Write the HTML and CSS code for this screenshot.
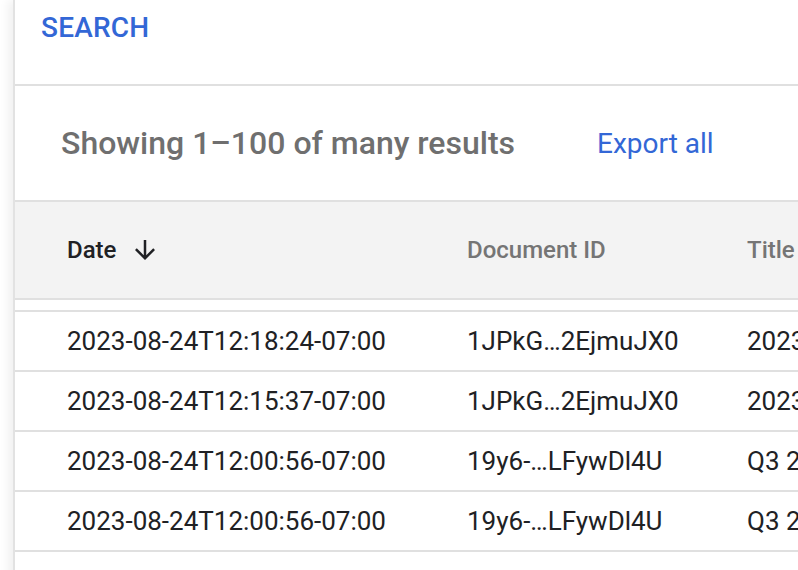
FILE: index.html
```html
<!DOCTYPE html>
<html lang="en">
<head>
<meta charset="utf-8">
<title>Results</title>
<link rel="stylesheet" href="styles.css">
</head>
<body>
<div class="panel">
  <div class="topbar">
    <span class="search">SEARCH</span>
  </div>
  <div class="toolbar">
    <span class="summary">Showing 1–100 of many results</span>
    <span class="export">Export all</span>
  </div>
  <div class="table">
    <div class="thead">
      <div class="th th-date">Date
        <svg class="sort" viewBox="0 0 24 24" width="30" height="30"><path d="M20 12l-1.41-1.41L13 16.17V4h-2v12.17l-5.58-5.59L4 12l8 8 8-8z" fill="#202124"/></svg>
      </div>
      <div class="th">Document ID</div>
      <div class="th">Title</div>
    </div>
    <div class="tbody">
      <div class="tr">
        <div class="td">2023-08-24T12:18:24-07:00</div>
        <div class="td">1JPkG…2EjmuJX0</div>
        <div class="td">2023-08-24 Weekly sync notes</div>
      </div>
      <div class="tr">
        <div class="td">2023-08-24T12:15:37-07:00</div>
        <div class="td">1JPkG…2EjmuJX0</div>
        <div class="td">2023-08-24 Weekly sync notes</div>
      </div>
      <div class="tr">
        <div class="td">2023-08-24T12:00:56-07:00</div>
        <div class="td">19y6-…LFywDl4U</div>
        <div class="td">Q3 2023 Planning</div>
      </div>
      <div class="tr">
        <div class="td">2023-08-24T12:00:56-07:00</div>
        <div class="td">19y6-…LFywDl4U</div>
        <div class="td">Q3 2023 Planning</div>
      </div>
      <div class="tr">
        <div class="td">2023-08-24T11:58:02-07:00</div>
        <div class="td">19y6-…LFywDl4U</div>
        <div class="td">Q3 2023 Planning</div>
      </div>
    </div>
  </div>
</div>
</body>
</html>
```
FILE: styles.css
```css
html, body {
  margin: 0;
  padding: 0;
  background: #ffffff;
  overflow: hidden;
  height: 570px;
}
body {
  font-family: Roboto, "Liberation Sans", sans-serif;
  color: #202124;
}
.panel {
  margin-left: 13px;
  border-left: 2px solid #e2e2e2;
  box-shadow: -5px 0 9px rgba(0, 0, 0, 0.06);
  min-height: 570px;
  width: 900px;
}
.topbar {
  height: 84px;
  border-bottom: 2px solid #e0e0e0;
  box-sizing: content-box;
  padding-left: 26px;
}
.search {
  display: block;
  padding-top: 12px;
  font-size: 28px;
  line-height: 32px;
  font-weight: 500;
  color: #3367d6;
  letter-spacing: 0.2px;
}
.toolbar {
  height: 114px;
  display: flex;
  align-items: center;
  padding-left: 46px;
}
.summary {
  font-size: 32px;
  font-weight: 500;
  color: #6f6f6f;
}
.export {
  margin-left: 82px;
  font-size: 28px;
  color: #3367d6;
}
.thead {
  display: grid;
  grid-template-columns: 400px 280px 1fr;
  height: 96px;
  background: #f3f3f3;
  border-top: 2px solid #e0e0e0;
  border-bottom: 2px solid #e0e0e0;
  margin-bottom: 10px;
}
.th {
  display: flex;
  align-items: center;
  padding-left: 52px;
  font-size: 24px;
  font-weight: 500;
  color: #757575;
  white-space: nowrap;
}
.th-date {
  color: #202124;
}
.sort {
  margin-left: 14px;
}
.tbody {
  border-top: 2px solid #e0e0e0;
}
.tr {
  display: grid;
  grid-template-columns: 400px 280px 1fr;
  height: 58px;
  border-bottom: 2px solid #e0e0e0;
}
.td {
  display: flex;
  align-items: center;
  padding-left: 52px;
  font-size: 26px;
  white-space: nowrap;
  overflow: hidden;
}
```
